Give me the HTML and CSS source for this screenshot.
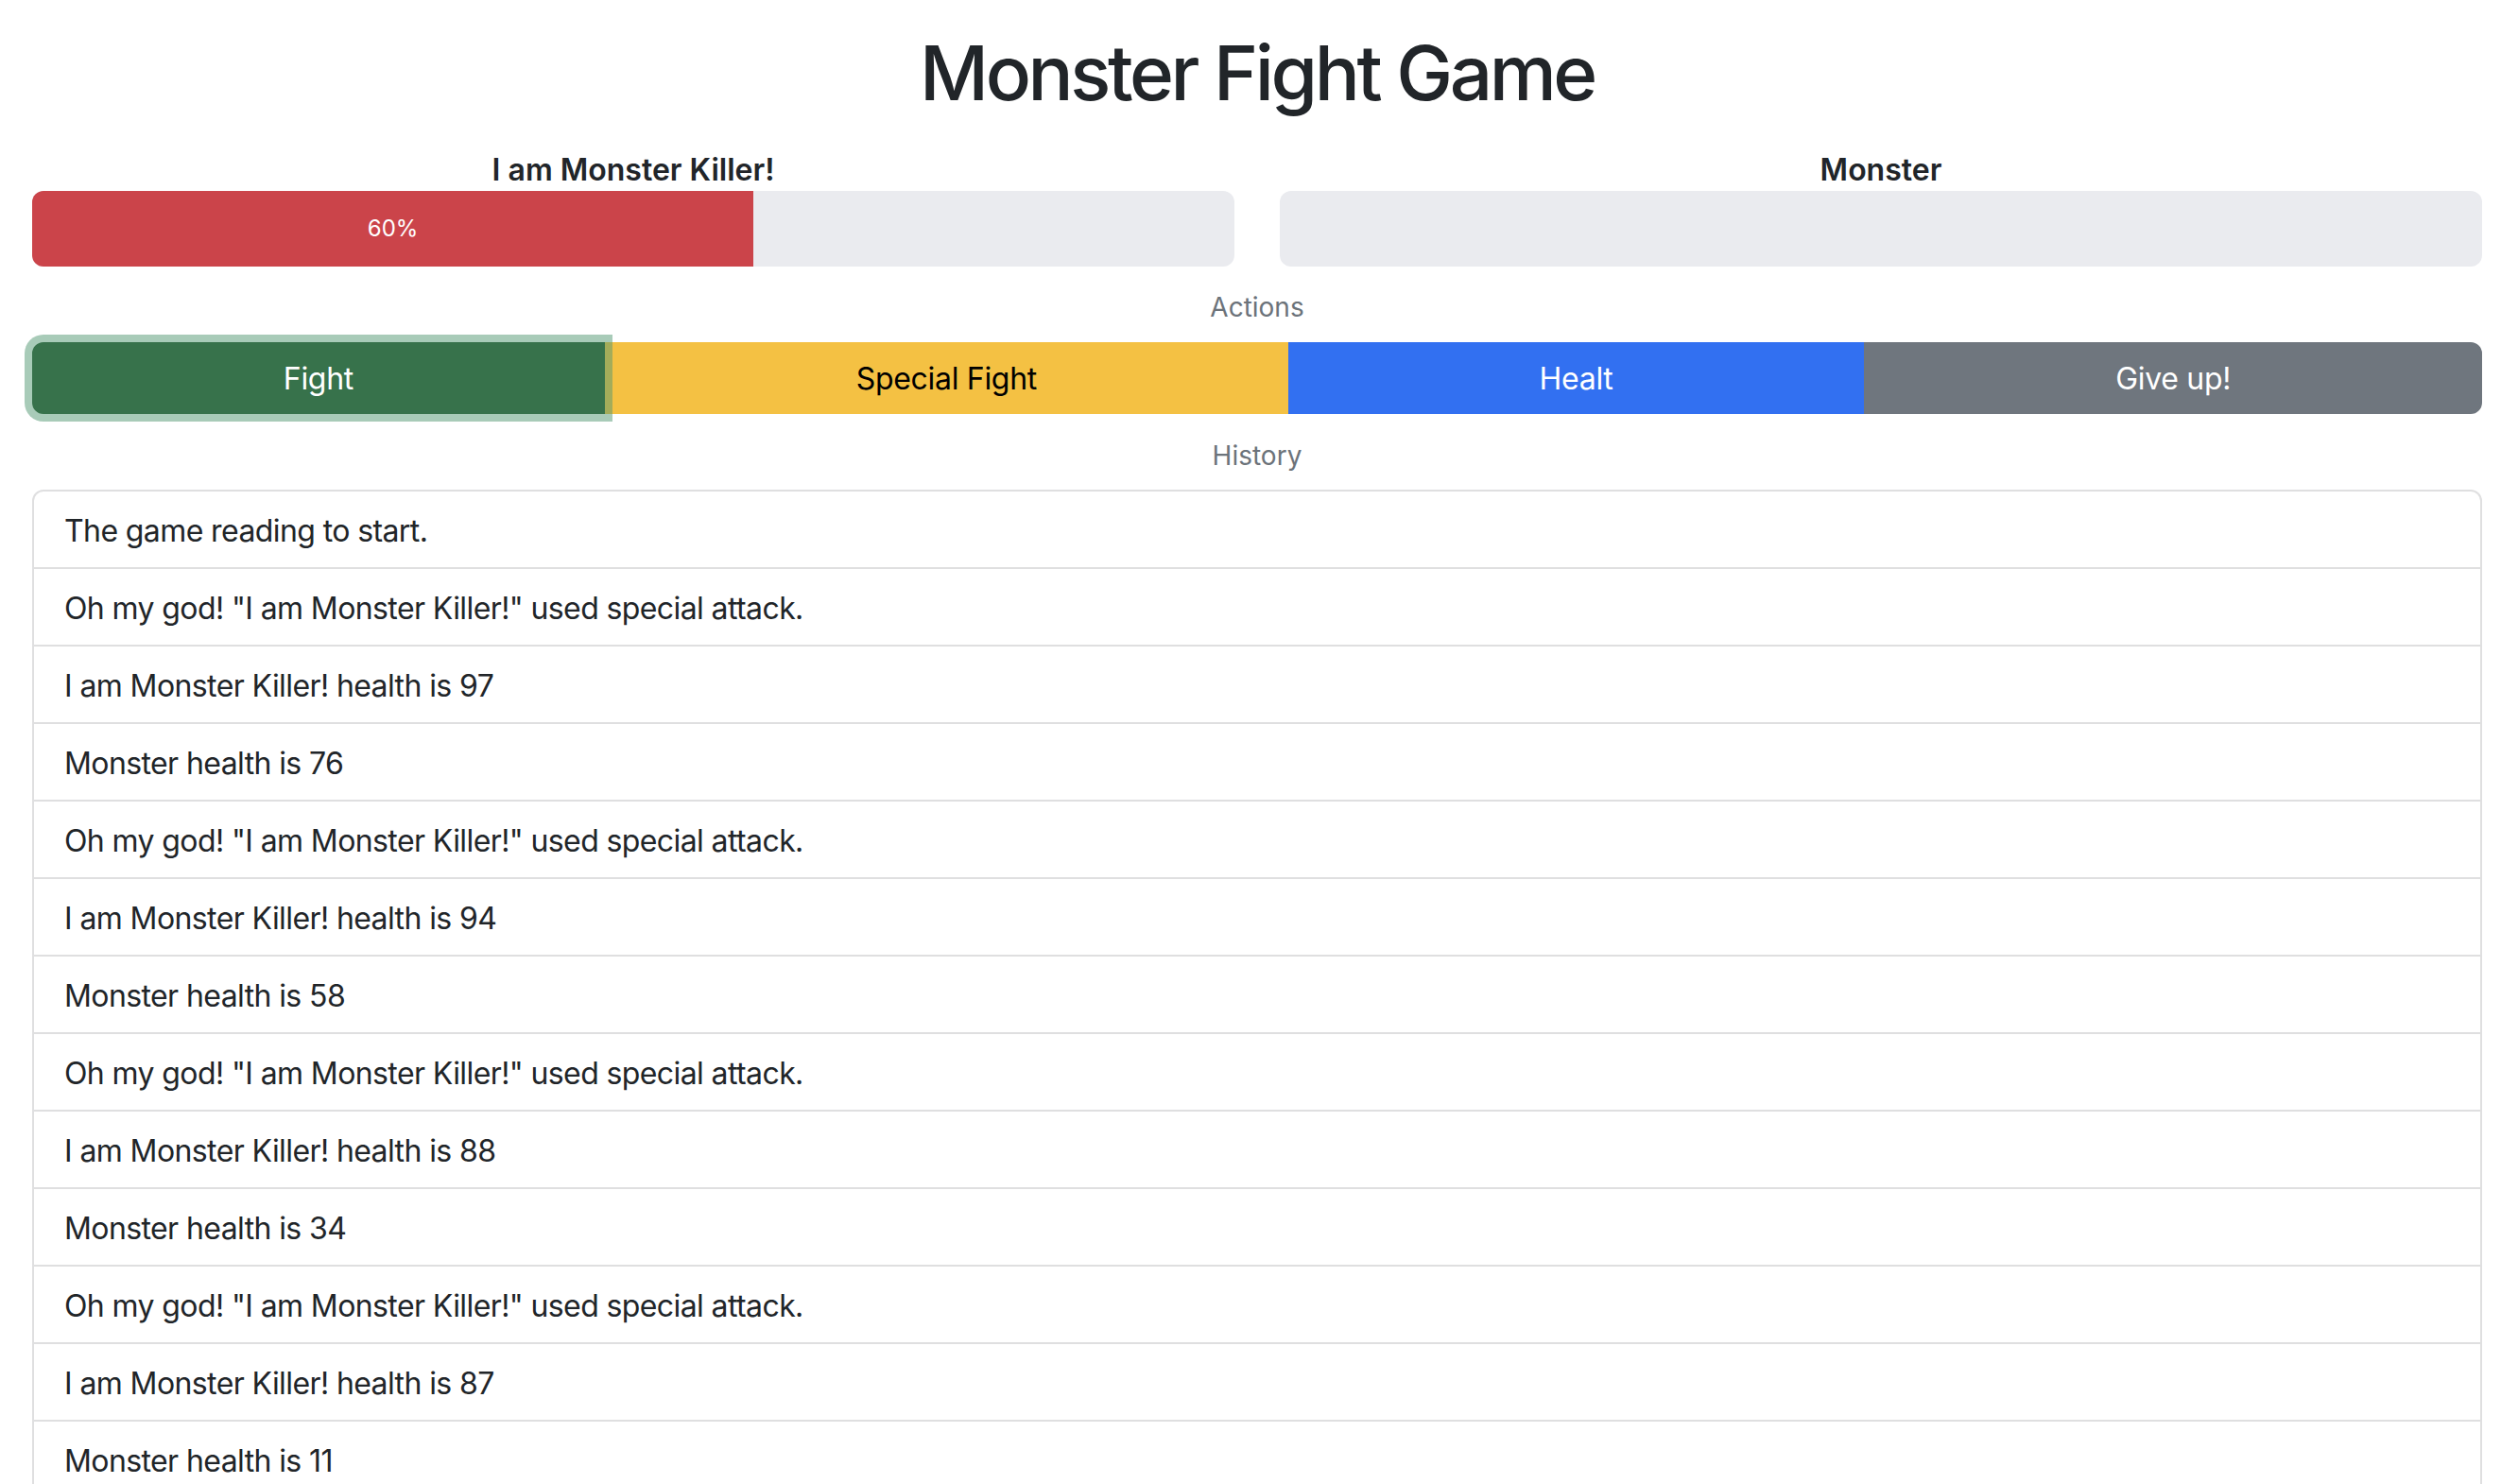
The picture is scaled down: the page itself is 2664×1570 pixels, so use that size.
FILE: index.html
```html
<!DOCTYPE html>
<html lang="en">
<head>
<meta charset="utf-8">
<title>Monster Fight Game</title>
<link rel="stylesheet" href="styles.css">
</head>
<body>
<div class="app">
  <h1 class="title">Monster Fight Game</h1>
  <div class="fighters">
    <section class="fighter">
      <h2 class="fighter-name">I am Monster Killer!</h2>
      <div class="progress">
        <div class="progress-bar" style="width: 60%">60%</div>
      </div>
    </section>
    <section class="fighter">
      <h2 class="fighter-name">Monster</h2>
      <div class="progress">
        <div class="progress-bar" style="width: 0%"></div>
      </div>
    </section>
  </div>
  <div class="section-label">Actions</div>
  <div class="btn-group">
    <button class="btn btn-success is-focused">Fight</button>
    <button class="btn btn-warning">Special Fight</button>
    <button class="btn btn-primary">Healt</button>
    <button class="btn btn-secondary">Give up!</button>
  </div>
  <div class="section-label history-label">History</div>
  <ul class="list-group">
    <li class="list-item">The game reading to start.</li>
    <li class="list-item">Oh my god! "I am Monster Killer!" used special attack.</li>
    <li class="list-item">I am Monster Killer! health is 97</li>
    <li class="list-item">Monster health is 76</li>
    <li class="list-item">Oh my god! "I am Monster Killer!" used special attack.</li>
    <li class="list-item">I am Monster Killer! health is 94</li>
    <li class="list-item">Monster health is 58</li>
    <li class="list-item">Oh my god! "I am Monster Killer!" used special attack.</li>
    <li class="list-item">I am Monster Killer! health is 88</li>
    <li class="list-item">Monster health is 34</li>
    <li class="list-item">Oh my god! "I am Monster Killer!" used special attack.</li>
    <li class="list-item">I am Monster Killer! health is 87</li>
    <li class="list-item">Monster health is 11</li>
  </ul>
</div>
</body>
</html>
```
FILE: styles.css
```css
html {
  overflow: hidden;
}
body {
  margin: 0;
  background: #ffffff;
  color: #212529;
  font-family: Inter, "Noto Sans", "Liberation Sans", sans-serif;
  font-size: 32px;
  line-height: 1.5;
}
.app {
  padding: 0 38px 0 34px;
}
.title {
  margin: 29px 0 29px;
  font-size: 80px;
  font-weight: 500;
  line-height: 1.2;
  text-align: center;
  letter-spacing: -3.4px;
}
.fighters {
  display: grid;
  grid-template-columns: 1fr 1fr;
  column-gap: 48px;
}
.fighter-name {
  margin: 0;
  padding-top: 3px;
  font-size: 32px;
  font-weight: 600;
  line-height: 45px;
  text-align: center;
}
.progress {
  display: flex;
  height: 80px;
  background: #eaebef;
  border-radius: 12px;
  overflow: hidden;
}
.progress-bar {
  display: flex;
  align-items: center;
  justify-content: center;
  background: #cb444a;
  color: #ffffff;
  font-size: 24px;
}
.section-label {
  margin: 22px 0 16px;
  font-size: 28px;
  line-height: 42px;
  color: #6c737a;
  text-align: center;
}
.history-label {
  margin: 23px 0 15px;
}
.btn-group {
  display: flex;
}
.btn {
  flex: 1 1 auto;
  margin: 0;
  padding: 13px 24px 11px;
  font-family: inherit;
  font-size: 32px;
  line-height: 48px;
  letter-spacing: -0.3px;
  border: 2px solid transparent;
  border-radius: 0;
  text-align: center;
  position: relative;
}
.btn:first-child {
  border-radius: 12px 0 0 12px;
}
.btn:last-child {
  border-radius: 0 12px 12px 0;
}
.btn-success {
  background: #37724b;
  border-color: #37724b;
  color: #ffffff;
}
.btn-warning {
  background: #f4c143;
  border-color: #f4c143;
  color: #000000;
}
.btn-primary {
  background: #3270f1;
  border-color: #3270f1;
  color: #ffffff;
}
.btn-secondary {
  background: #6f767e;
  border-color: #6f767e;
  color: #ffffff;
}
.is-focused {
  z-index: 1;
  box-shadow: 0 0 0 8px rgba(81, 151, 113, 0.5);
}
.list-group {
  margin: 0;
  padding: 0;
  list-style: none;
  border: 2px solid #dfdfe0;
  border-radius: 12px;
}
.list-item {
  padding: 18px 32px 14px;
  line-height: 48px;
  letter-spacing: -0.6px;
  border-top: 2px solid #dfdfe0;
}
.list-item:first-child {
  border-top: 0;
}
```
